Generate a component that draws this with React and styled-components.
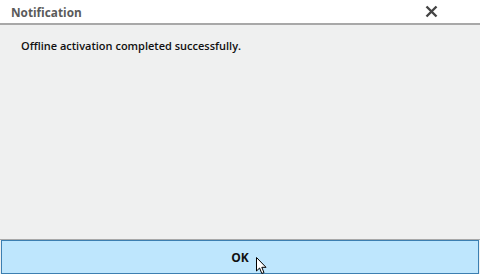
import styled, { createGlobalStyle } from "styled-components";

const GlobalStyle = createGlobalStyle`
  html, body {
    margin: 0;
    padding: 0;
    width: 480px;
    height: 274px;
    overflow: hidden;
  }
  body {
    font-family: "Open Sans", "Noto Sans", sans-serif;
  }
`;

const Dialog = styled.div`
  display: flex;
  flex-direction: column;
  width: 480px;
  height: 274px;
  background: #eff0f0;
`;

const TitleBar = styled.div`
  display: flex;
  align-items: center;
  justify-content: space-between;
  height: 23px;
  padding: 0 42px 0 11px;
  background: #ffffff;
  border-bottom: 2px solid #a8a8a8;
`;

const Title = styled.span`
  font-size: 11.8px;
  font-weight: 700;
  color: #5a5a5a;
`;

const CloseButton = styled.button`
  display: flex;
  align-items: center;
  justify-content: center;
  width: 13px;
  height: 13px;
  padding: 0;
  border: none;
  background: transparent;
`;

const Body = styled.div`
  flex: 1;
  padding: 13px 21px;
`;

const Message = styled.p`
  margin: 0;
  font-size: 11px;
  font-weight: 600;
  color: #111;
`;

const Footer = styled.div`
  border-top: 1px solid #a8a8a8;
  padding: 0 1px;
`;

const OkButton = styled.button`
  position: relative;
  display: flex;
  align-items: center;
  justify-content: center;
  width: 100%;
  height: 34px;
  border: 1px solid #3c7fb1;
  background: #bee6fd;
  font-family: "Open Sans", "Noto Sans", sans-serif;
  font-size: 12px;
  font-weight: 700;
  color: #111;
`;

const Cursor = styled.svg`
  position: absolute;
  left: 254px;
  top: 16px;
`;

const App = () => {
  return (
    <>
      <GlobalStyle />
      <Dialog>
        <TitleBar>
          <Title>Notification</Title>
          <CloseButton aria-label="Close">
            <svg width="13" height="13" viewBox="0 0 13 13">
              <path d="M1.5 1.5 L11.5 11.5 M11.5 1.5 L1.5 11.5" stroke="#444" strokeWidth="2.4" />
            </svg>
          </CloseButton>
        </TitleBar>
        <Body>
          <Message>Offline activation completed successfully.</Message>
        </Body>
        <Footer>
          <OkButton>
            OK
            <Cursor width="12" height="18" viewBox="0 0 12 18">
              <path d="M0.5 0.5 L0.5 14 L3.6 11 L5.8 16.5 L8 15.6 L5.8 10.3 L10 10.3 Z" fill="#fff" stroke="#000" strokeWidth="1" />
            </Cursor>
          </OkButton>
        </Footer>
      </Dialog>
    </>
  );
};

export default App;
